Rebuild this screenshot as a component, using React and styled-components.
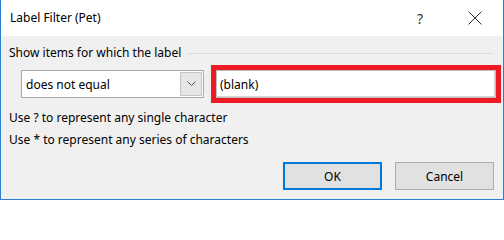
import React from 'react';
import styled, { createGlobalStyle } from 'styled-components';

const GlobalStyle = createGlobalStyle`
  html, body {
    margin: 0;
    padding: 0;
    background: #ffffff;
  }
  * {
    box-sizing: border-box;
  }
`;

const Window = styled.div`
  width: 504px;
  height: 200px;
  border: 1px solid #2a7fd4;
  border-top: none;
  display: flex;
  flex-direction: column;
  font-family: "Noto Sans", "Open Sans", sans-serif;
  font-size: 12px;
  color: #000;
  overflow: hidden;
`;

const TitleBar = styled.div`
  height: 36px;
  background: #fff;
  display: flex;
  align-items: center;
  padding-left: 9px;
`;

const Title = styled.div`
  flex: 1;
  font-size: 12px;
  padding-bottom: 1px;
`;

const TitleButton = styled.div`
  width: ${p => p.$w}px;
  height: 36px;
  display: flex;
  align-items: center;
  justify-content: center;
  color: #333;
  font-size: 14px;
`;

const Body = styled.div`
  flex: 1;
  background: #f0f0f0;
  padding: 10px 2px 0 8px;
  display: flex;
  flex-direction: column;
`;

const GroupHeader = styled.div`
  display: flex;
  align-items: center;
  height: 14px;
  line-height: 14px;
  padding-right: 7px;
  &::after {
    content: "";
    flex: 1;
    height: 1px;
    margin-left: 7px;
    background: #dcdcdc;
  }
`;

const FilterRow = styled.div`
  display: flex;
  align-items: center;
  margin-top: 5px;
  padding-left: 12px;
  gap: 7px;
`;

const Select = styled.div`
  width: 183px;
  height: 28px;
  background: #fff;
  border: 1px solid #a9a9a9;
  display: flex;
  align-items: center;
  justify-content: space-between;
  padding: 0 1px 0 4px;
`;

const SelectArrow = styled.div`
  width: 22px;
  height: 24px;
  background: #e6e6e6;
  border: 1px solid #c4c4c4;
  display: flex;
  align-items: center;
  justify-content: center;
`;

const Highlight = styled.div`
  flex: 1;
  border: 5px solid #ed1c24;
`;

const TextInput = styled.div`
  height: 28px;
  background: #fff;
  border: 1px solid #bdbdbd;
  box-shadow: inset -1px -1px 0 #d6d6d6;
  display: flex;
  align-items: center;
  padding-left: 3px;
`;

const Hints = styled.div`
  margin-top: 4px;
  line-height: 22px;
`;

const Footer = styled.div`
  display: flex;
  justify-content: flex-end;
  gap: 13px;
  margin-top: 11px;
  padding-right: 7px;
`;

const Button = styled.button`
  width: 99px;
  height: 28px;
  font-family: inherit;
  font-size: 12px;
  color: #000;
  background: #e1e1e1;
  border: 1px solid ${p => (p.$primary ? '#0078d7' : '#adadad')};
  box-shadow: ${p => (p.$primary ? 'inset 0 0 0 1px #0078d7' : 'none')};
  padding: 0;
`;

function Chevron() {
  return (
    <svg width="9" height="6" viewBox="0 0 9 6">
      <path d="M0.5 0.5 L4.5 4.5 L8.5 0.5" fill="none" stroke="#555" strokeWidth="1" />
    </svg>
  );
}

function CloseIcon() {
  return (
    <svg width="14" height="14" viewBox="0 0 14 14">
      <path d="M0.5 0.5 L13.5 13.5 M13.5 0.5 L0.5 13.5" stroke="#333" strokeWidth="1" />
    </svg>
  );
}

export default function App() {
  return (
    <>
      <GlobalStyle />
      <Window>
        <TitleBar>
          <Title>Label Filter (Pet)</Title>
          <TitleButton $w={54}>?</TitleButton>
          <TitleButton $w={56}>
            <CloseIcon />
          </TitleButton>
        </TitleBar>
        <Body>
          <GroupHeader>Show items for which the label</GroupHeader>
          <FilterRow>
            <Select>
              <span>does not equal</span>
              <SelectArrow>
                <Chevron />
              </SelectArrow>
            </Select>
            <Highlight>
              <TextInput>(blank)</TextInput>
            </Highlight>
          </FilterRow>
          <Hints>
            <div>Use ? to represent any single character</div>
            <div>Use * to represent any series of characters</div>
          </Hints>
          <Footer>
            <Button $primary>OK</Button>
            <Button>Cancel</Button>
          </Footer>
        </Body>
      </Window>
    </>
  );
}
